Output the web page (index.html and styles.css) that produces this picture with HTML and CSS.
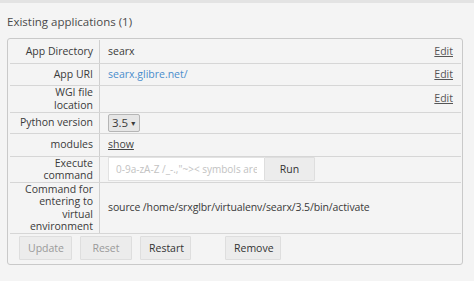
FILE: index.html
```html
<!DOCTYPE html>
<html>
<head>
<meta charset="utf-8">
<link rel="stylesheet" href="styles.css">
</head>
<body>
<div class="topbar"></div>
<div class="section">
  <div class="title">Existing applications (1)</div>
  <div class="panel">
    <table class="apps">
      <tr class="r1">
        <td class="lbl">App Directory</td>
        <td class="val">searx<a class="edit" href="#">Edit</a></td>
      </tr>
      <tr class="r2">
        <td class="lbl">App URI</td>
        <td class="val"><a class="uri" href="#">searx.glibre.net/</a><a class="edit" href="#">Edit</a></td>
      </tr>
      <tr class="r3">
        <td class="lbl">WGI file<br>location</td>
        <td class="val"><a class="edit" href="#">Edit</a></td>
      </tr>
      <tr class="r4">
        <td class="lbl">Python version</td>
        <td class="val"><span class="select">3.5 <span class="caret">▾</span></span></td>
      </tr>
      <tr class="r5">
        <td class="lbl">modules</td>
        <td class="val"><a class="show" href="#">show</a></td>
      </tr>
      <tr class="r6">
        <td class="lbl">Execute<br>command</td>
        <td class="val"><div class="exec"><input class="cmd" type="text" placeholder="0-9a-zA-Z /_-.,&quot;~&gt;&lt; symbols are allowed"><button class="btn run">Run</button></div></td>
      </tr>
      <tr class="r7">
        <td class="lbl">Command for<br>entering to<br>virtual<br>environment</td>
        <td class="val"><span class="path">source /home/srxglbr/virtualenv/searx/3.5/bin/activate</span></td>
      </tr>
      <tr class="r8">
        <td class="actions" colspan="2">
          <div class="btns">
            <button class="btn dis">Update</button>
            <button class="btn dis">Reset</button>
            <button class="btn">Restart</button>
            <button class="btn remove">Remove</button>
          </div>
        </td>
      </tr>
    </table>
  </div>
</div>
</body>
</html>
```
FILE: styles.css
```css
html, body {
  margin: 0;
  padding: 0;
}
body {
  background: #f4f4f4;
  font-family: "Open Sans", "DejaVu Sans", sans-serif;
  color: #3a3a3a;
  font-size: 10.5px;
  width: 474px;
  height: 281px;
  overflow: hidden;
}
.topbar {
  height: 3px;
  background: #e3e3e3;
}
.section {
  padding: 0 12px 0 7px;
}
.title {
  font-size: 11.5px;
  line-height: 16px;
  padding-top: 11px;
  margin-bottom: 8px;
  color: #4a4a4a;
}
.panel {
  border: 1px solid #c9c9c9;
  border-radius: 3px;
  padding: 1px 1px 2px 2px;
  width: 451px;
}
.apps {
  width: 100%;
  border-collapse: collapse;
}
.apps td {
  padding: 0;
  border-bottom: 1px solid #d6d6d6;
  line-height: 12.5px;
  vertical-align: middle;
}
.apps tr.r8 td {
  border-bottom: none;
}
.lbl {
  width: 83px;
  text-align: right;
  padding-right: 6px !important;
  border-right: 1px solid #cfcfcf;
}
.val {
  padding-left: 8px !important;
  padding-right: 8px !important;
}
.r1 { height: 23px; }
.r2 { height: 22px; }
.r3 { height: 27px; }
.r4 { height: 21px; }
.r5 { height: 23px; }
.r6 { height: 26px; }
.r7 { height: 51px; }
.r8 { height: 29px; }
.path {
  letter-spacing: -0.12px;
}
.edit {
  float: right;
  color: #555;
  text-decoration: underline;
}
.uri {
  color: #4a8dcc;
  text-decoration: none;
}
.show {
  color: #444;
  text-decoration: underline;
}
.select {
  display: inline-block;
  height: 16px;
  line-height: 16px;
  padding: 0 4px 0 3px;
  background: #e6e6e6;
  border: 1px solid #b5b5b5;
  border-radius: 2px;
  font-size: 11.5px;
}
.caret {
  font-size: 8px;
  vertical-align: 1px;
}
.exec {
  display: flex;
  height: 24px;
}
.cmd {
  box-sizing: border-box;
  width: 156px;
  height: 24px;
  border: 1px solid #e2e2e2;
  border-right: none;
  background: #fff;
  padding: 0 7px;
  font-family: "Open Sans", "DejaVu Sans", sans-serif;
  font-size: 10px;
  outline: none;
}
.cmd::placeholder {
  color: #c2c2c2;
}
.btn {
  box-sizing: border-box;
  height: 24px;
  border: 1px solid #dedede;
  background: #ececec;
  color: #333;
  font-family: "Open Sans", "DejaVu Sans", sans-serif;
  font-size: 10.5px;
  padding: 0 8px;
  border-radius: 1px;
  margin: 0;
}
.run {
  width: 51px;
}
.actions {
  padding-left: 9px !important;
}
.btns {
  display: flex;
  gap: 8px;
  align-items: center;
}
.btns .btn:nth-child(1) { width: 53px; }
.btns .btn:nth-child(2) { width: 52px; }
.btns .btn:nth-child(3) { width: 51px; }
.btn.dis {
  color: #9a9a9a;
}
.btn.remove {
  margin-left: 26px;
  width: 56px;
}
```
